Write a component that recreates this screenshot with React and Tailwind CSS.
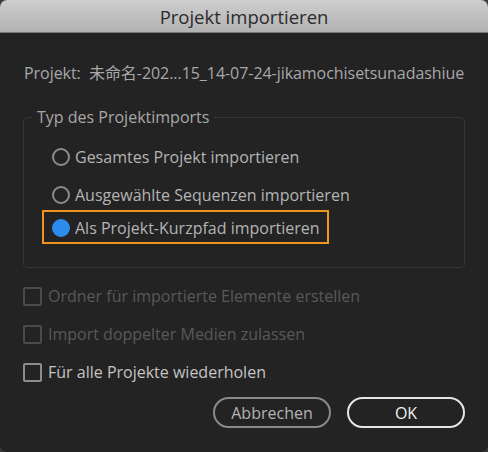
import React from "react";

const Radio = ({ checked, label }) => (
  <div className="flex items-center gap-[5px] h-[24px]">
    {checked ? (
      <span className="w-[18px] h-[18px] rounded-full bg-[#2d8ceb]" />
    ) : (
      <span className="w-[18px] h-[18px] rounded-full border-2 border-[#8c8c8c]" />
    )}
    <span className="text-[#b4b4b4]">{label}</span>
  </div>
);

const Checkbox = ({ label, disabled }) => (
  <div className="flex items-center gap-[6px] h-[24px]">
    <span
      className={`w-[19px] h-[19px] rounded-[2px] border-2 ${
        disabled ? "border-[#4a4a4a]" : "border-[#8c8c8c]"
      }`}
    />
    <span className={disabled ? "text-[#595959]" : "text-[#c4c4c4]"}>{label}</span>
  </div>
);

const App = () => {
  return (
    <div
      className="w-[488px] h-[452px] bg-[#3a3a3a] text-[16px] leading-[24px]"
      style={{ fontFamily: '"Open Sans", "Noto Sans CJK SC", sans-serif' }}
    >
      <div className="w-full h-full rounded-[7px] overflow-hidden bg-[#232323] flex flex-col">
        {/* Title bar */}
        <div className="h-[33px] shrink-0 bg-gradient-to-b from-[#cecece] to-[#b2b2b2] border-b border-[#7a7a7a] flex items-center justify-center">
          <span className="text-[18.5px] text-[#2b2b2b] pt-[1px]">Projekt importieren</span>
        </div>

        <div className="flex flex-col px-[23px]">
          <div className="pt-[28px] pl-[1px] text-[#a8a8a8] whitespace-nowrap tracking-[-0.05px]">
            Projekt:&nbsp; 未命名-202...15_14-07-24-jikamochisetsunadashiue
          </div>

          {/* Group */}
          <div className="relative mt-[32px] h-[151px] border border-[#363636] rounded-[4px]">
            <span className="absolute -top-[13px] left-[8px] px-[5px] bg-[#232323] text-[#a8a8a8]">
              Typ des Projektimports
            </span>
            <div className="flex flex-col pt-[27px] pl-[28px] gap-[14px]">
              <Radio label="Gesamtes Projekt importieren" />
              <Radio label="Ausgewählte Sequenzen importieren" />
            </div>
            <div className="mt-[3px] ml-[18px] w-[287px] h-[34px] border-2 border-[#f0961e] flex items-center pl-[8px] pt-[2px]">
              <Radio checked label="Als Projekt-Kurzpfad importieren" />
            </div>
          </div>

          <div className="flex flex-col mt-[16px] gap-[14px]">
            <Checkbox disabled label="Ordner für importierte Elemente erstellen" />
            <Checkbox disabled label="Import doppelter Medien zulassen" />
            <Checkbox label="Für alle Projekte wiederholen" />
          </div>

          <div className="flex justify-end gap-[16px] mt-[13px]">
            <button className="w-[118px] h-[31px] rounded-full border-2 border-[#8a8a8a] text-[#b4b4b4]">
              Abbrechen
            </button>
            <button className="w-[118px] h-[31px] rounded-full border-2 border-[#e6e6e6] text-[#f0f0f0]">
              OK
            </button>
          </div>
        </div>
      </div>
    </div>
  );
};

export default App;
